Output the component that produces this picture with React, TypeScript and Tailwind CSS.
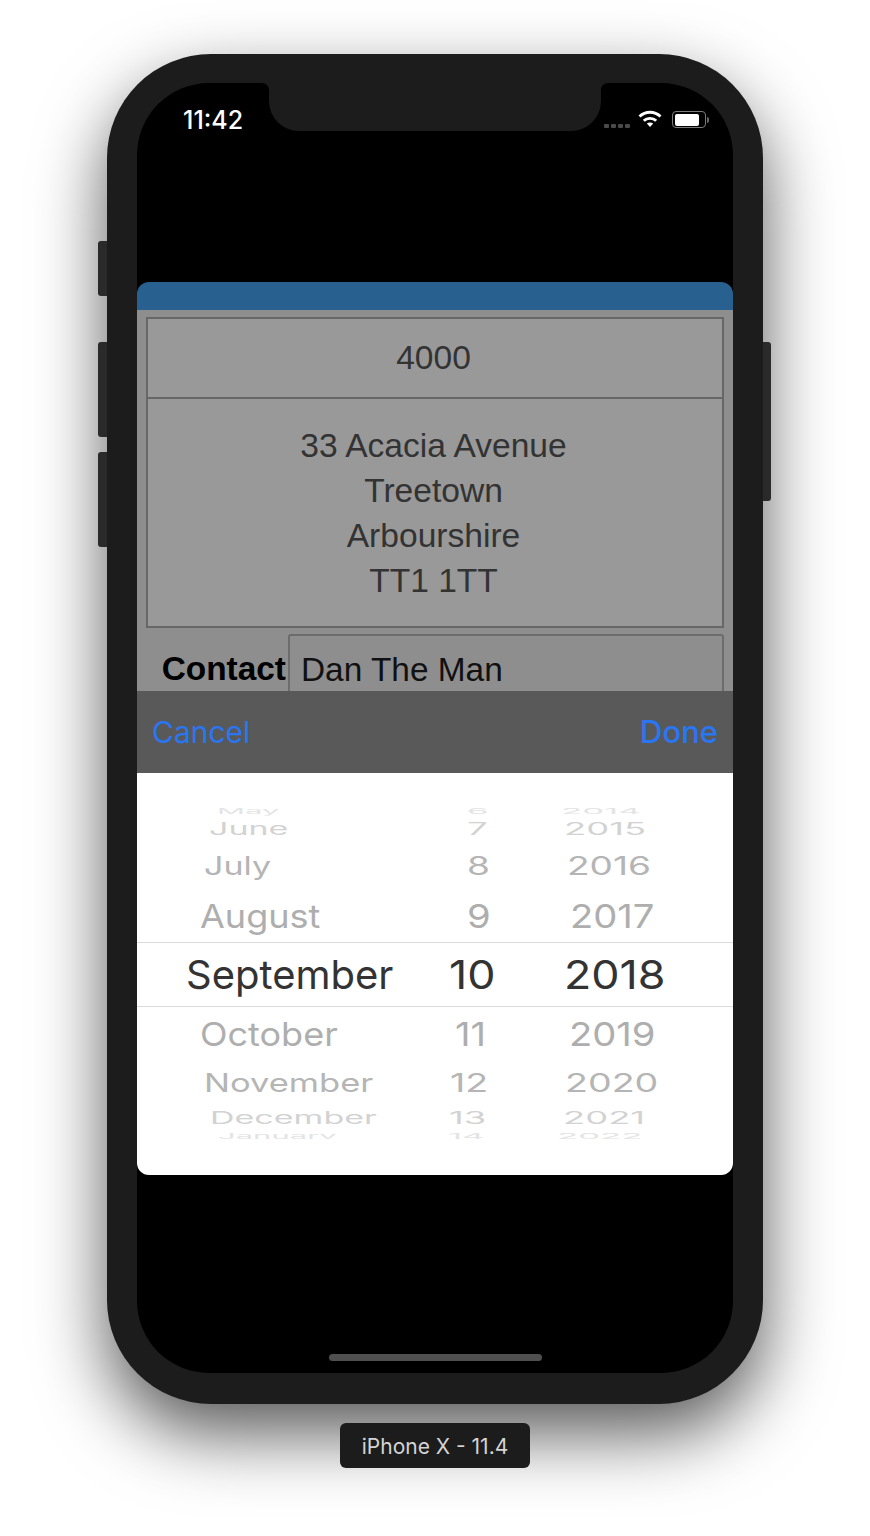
const SF = "font-[family-name:Inter,sans-serif]"

const WHEEL_ROWS = [
  { row: 'h-[10px] -mt-[2px] text-[#e4e4e4]', text: 'text-[31px] scale-y-[0.25]', num: 'text-[31px] scale-x-[1.12] scale-y-[0.25]', month: 'May', monthPl: 'pl-[80px]', day: '6', dayPl: 'pl-[30px]', year: '2014', yearPl: 'pl-[11px]' },
  { row: 'h-[26px] text-[#d2d2d2]', text: 'text-[34px] scale-y-[0.49]', num: 'text-[34px] scale-x-[1.07] scale-y-[0.49]', month: 'June', monthPl: 'pl-[72px]', day: '7', dayPl: 'pl-[30px]', year: '2015', yearPl: 'pl-[14px]' },
  { row: 'h-[48px] text-[#b5b5b5]', text: 'text-[34px] scale-y-[0.74]', num: 'text-[34px] scale-x-[1.09] scale-y-[0.74]', month: 'July', monthPl: 'pl-[67px]', day: '8', dayPl: 'pl-[30px]', year: '2016', yearPl: 'pl-[17px]' },
  { row: 'h-[52px] text-[#aeaeae]', text: 'text-[36px] scale-y-[0.92]', num: 'text-[36px] scale-x-[1.06] scale-y-[0.92]', month: 'August', monthPl: 'pl-[63px]', day: '9', dayPl: 'pl-[30px]', year: '2017', yearPl: 'pl-[20px]' },
  { row: 'h-[65px] text-[#333333] border-y border-[#dcdcdc]', text: 'text-[40px]', num: 'text-[40px] scale-x-[1.12]', month: 'September', monthPl: 'pl-[49px]', day: '10', dayPl: 'pl-[12px]', year: '2018', yearPl: 'pl-[14px]' },
  { row: 'h-[53px] text-[#aeaeae]', text: 'text-[36px] scale-y-[0.92]', num: 'text-[36px] scale-x-[1.06] scale-y-[0.92]', month: 'October', monthPl: 'pl-[63px]', day: '11', dayPl: 'pl-[18px]', year: '2019', yearPl: 'pl-[19px]' },
  { row: 'h-[46px] text-[#b5b5b5]', text: 'text-[34.5px] scale-y-[0.74]', num: 'text-[34.5px] scale-x-[1.09] scale-y-[0.74]', month: 'November', monthPl: 'pl-[67px]', day: '12', dayPl: 'pl-[13px]', year: '2020', yearPl: 'pl-[15px]' },
  { row: 'h-[24px] text-[#d2d2d2]', text: 'text-[34px] scale-y-[0.49]', num: 'text-[34px] scale-x-[1.07] scale-y-[0.49]', month: 'December', monthPl: 'pl-[73px]', day: '13', dayPl: 'pl-[12px]', year: '2021', yearPl: 'pl-[13px]' },
  { row: 'h-[12px] text-[#e4e4e4]', text: 'text-[31px] scale-y-[0.25]', num: 'text-[31px] scale-x-[1.12] scale-y-[0.25]', month: 'January', monthPl: 'pl-[81px]', day: '14', dayPl: 'pl-[11px]', year: '2022', yearPl: 'pl-[7px]' },
]

function WifiIcon() {
  return (
    <svg width="24" height="18" viewBox="0 0 24 18" fill="none" stroke="white" strokeWidth="2.8">
      <path d="M1.5 6.5 C7.5 0.8 16.5 0.8 22.5 6.5" />
      <path d="M5.8 10.8 C9 7.6 15 7.6 18.2 10.8" />
      <path d="M8.8 13.6 Q12 11.4 15.2 13.6 L12 17 Z" fill="white" stroke="none" />
    </svg>
  )
}

function Battery() {
  return (
    <div className="flex items-center">
      <div className="w-[34px] h-[17px] rounded-[4px] border-[1.5px] border-[#7c7c7c] p-[1.5px]">
        <div className="w-[24px] h-full bg-white rounded-[2px]" />
      </div>
      <div className="w-[2px] h-[6px] ml-[1px] bg-[#666666] rounded-r-sm" />
    </div>
  )
}

function StatusBar() {
  return (
    <div className="flex h-[48px] shrink-0">
      <div className={`w-[132px] pl-[46px] pt-[22px] text-white text-[25px] leading-[30px] font-medium ${SF}`}>11:42</div>
      <div className="relative w-[332px] bg-[#1c1c1c] rounded-b-[30px]">
        <svg className="absolute left-[-7px] top-0" width="7" height="7" viewBox="0 0 7 7">
          <path d="M0 0 H7 V7 C7 3 4 0 0 0 Z" fill="#1c1c1c" />
        </svg>
        <svg className="absolute right-[-7px] top-0" width="7" height="7" viewBox="0 0 7 7">
          <path d="M7 0 H0 V7 C0 3 3 0 7 0 Z" fill="#1c1c1c" />
        </svg>
      </div>
      <div className="flex-1 flex items-start pt-[27px] pl-[3px]">
        <div className="flex gap-[2px] mt-[14px]">
          <div className="w-[5px] h-[4px] bg-[#4a4a4a] rounded-[1px]" />
          <div className="w-[5px] h-[4px] bg-[#4a4a4a] rounded-[1px]" />
          <div className="w-[5px] h-[4px] bg-[#4a4a4a] rounded-[1px]" />
          <div className="w-[5px] h-[4px] bg-[#4a4a4a] rounded-[1px]" />
        </div>
        <div className="ml-[8px]"><WifiIcon /></div>
        <div className="ml-[10px] mt-[1px]"><Battery /></div>
      </div>
    </div>
  )
}

function AddressForm() {
  return (
    <div className="h-[381px] overflow-hidden bg-[#8e8e8e] px-[9px] pt-[7px] font-[family-name:'Liberation_Sans',Arial,sans-serif]">
      <div className="border-2 border-[#676767] bg-[#999999] text-[#333333] text-[33.6px] text-center">
        <div className="h-[80px] pr-[3px] flex items-center justify-center border-b-2 border-[#676767]">4000</div>
        <div className="h-[227px] pr-[3px] flex flex-col justify-center leading-[45px]">
          <div>33 Acacia Avenue</div>
          <div>Treetown</div>
          <div>Arbourshire</div>
          <div>TT1 1TT</div>
        </div>
      </div>
      <div className="flex mt-[6px]">
        <div className="w-[142px] pt-[15px] pr-[2px] text-right text-[33.4px] leading-[40px] font-bold text-black">Contact</div>
        <div className="flex-1 h-[80px] border-2 border-[#6c6c6c] rounded-[3px] pl-[11px] pt-[14px] text-[33.4px] leading-[40px] text-[#111111]">Dan The Man</div>
      </div>
    </div>
  )
}

function DateWheel() {
  return (
    <div className={`bg-white rounded-b-[12px] h-[402px] pt-[35px] ${SF}`}>
      <div className="h-[331px] overflow-hidden">
        {WHEEL_ROWS.map((r) => (
          <div key={r.month} className={`flex items-center leading-none ${r.row}`}>
            <div className={`w-[300px] ${r.monthPl}`}><span className={`inline-block origin-left ${r.text}`}>{r.month}</span></div>
            <div className={`w-[113px] ${r.dayPl}`}><span className={`inline-block origin-left ${r.num}`}>{r.day}</span></div>
            <div className={`flex-1 ${r.yearPl}`}><span className={`inline-block origin-left ${r.num}`}>{r.year}</span></div>
          </div>
        ))}
      </div>
    </div>
  )
}

export default function App() {
  return (
    <div className="relative w-[870px] h-[1536px] bg-white overflow-hidden flex flex-col items-center pt-[54px]">
      <div className="relative w-[656px] h-[1350px] shrink-0 rounded-[104px] bg-[#1c1c1c] px-[30px] pt-[29px] pb-[31px] shadow-[0_30px_70px_rgba(0,0,0,0.65)]">
        {/* side buttons */}
        <div className="absolute left-[-9px] top-[187px] w-[9px] h-[55px] bg-[#2a2a2a] rounded-l-[3px]" />
        <div className="absolute left-[-9px] top-[288px] w-[9px] h-[95px] bg-[#2a2a2a] rounded-l-[3px]" />
        <div className="absolute left-[-9px] top-[398px] w-[9px] h-[95px] bg-[#2a2a2a] rounded-l-[3px]" />
        <div className="absolute right-[-8px] top-[288px] w-[8px] h-[159px] bg-[#2a2a2a] rounded-r-[3px]" />

        <div className="flex flex-col h-full bg-black rounded-[72px] overflow-hidden">
          <StatusBar />
          <div className="mt-[151px]">
            <div className="h-[28px] bg-[#28618f] rounded-t-[12px]" />
            <AddressForm />
            <div className={`h-[82px] bg-[#595959] flex items-center justify-between px-[15px] text-[30px] text-[#2a76f2] ${SF}`}>
              <span>Cancel</span>
              <span className="font-medium text-[31px]">Done</span>
            </div>
            <DateWheel />
          </div>
          <div className="mt-auto mb-[12px] mx-auto w-[213px] h-[7px] bg-[#4f4f4f] rounded-full" />
        </div>
      </div>

      <div className={`relative mt-[19px] w-[190px] h-[45px] pt-[3px] bg-[#1c1c1c] rounded-[6px] flex items-center justify-center text-[21px] text-[#d4d4d4] ${SF}`}>
        iPhone X - 11.4
      </div>
    </div>
  )
}
